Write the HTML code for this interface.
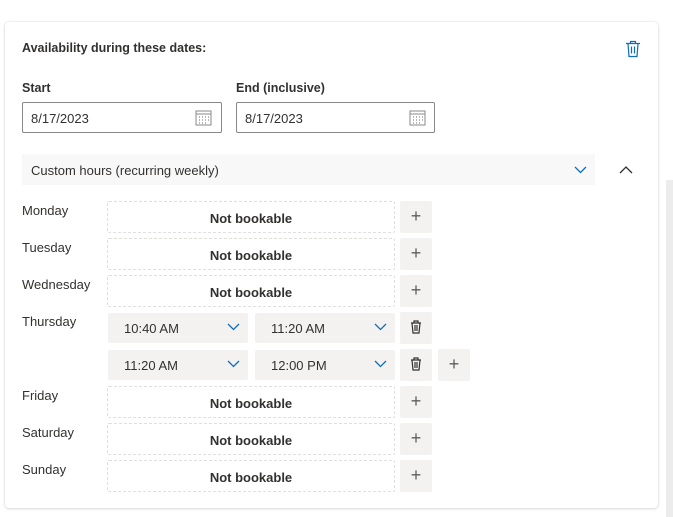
<!DOCTYPE html>
<html><head><style>
*{box-sizing:border-box;margin:0;padding:0}
body{width:673px;height:517px;background:#fff;font-family:"Liberation Sans",sans-serif;color:#323130;position:relative;overflow:hidden;font-size:13px}
.card{position:absolute;left:5px;top:22px;width:653px;height:486px;background:#fff;border-radius:4px;box-shadow:0 0 2px rgba(0,0,0,.12),0 1px 3px rgba(0,0,0,.12)}
.a{position:absolute}
.lbl{font-weight:bold;font-size:12.5px}
.inp{position:absolute;height:31px;border:1px solid #8a8886;border-radius:2px;padding:8px 0 0 8px;font-size:13px}
.nb{position:absolute;left:107px;width:288px;height:32px;border:1px dashed #e1dfdd;border-radius:2px;text-align:center;font-weight:bold;font-size:13px;padding-top:9px;color:#323130}
.btn{position:absolute;width:32px;height:32px;background:#f3f2f1;border-radius:2px;color:#605e5c;font-size:18px;text-align:center;line-height:30px}
.day{position:absolute;left:22px;font-size:13px}
.sel{position:absolute;width:140px;height:30px;background:#f3f2f1;border-radius:2px;padding:8px 0 0 16px;font-size:13px}
.chev{position:absolute;right:8px;top:10px}
</style></head><body>
<div class="card"></div>
<div class="a lbl" style="left:22px;top:41px">Availability during these dates:</div>
<svg class="a" style="left:625px;top:40px" width="16" height="18" viewBox="0 0 16 18" fill="none" stroke="#0f6cbd" stroke-width="1.2"><path d="M1 3.5h14M5.5 3.5V1.5h5v2M3 3.5l1 13h8l1-13M6.5 6.5v7M9.5 6.5v7"/></svg>
<div class="a lbl" style="left:22px;top:81px">Start</div>
<div class="a lbl" style="left:236px;top:81px">End (inclusive)</div>
<div class="inp" style="left:22px;top:102px;width:200px">8/17/2023</div>
<div class="inp" style="left:236px;top:102px;width:199px">8/17/2023</div>
<svg class="a" style="left:195px;top:110px" width="17" height="16" viewBox="0 0 17 16" fill="none" stroke="#8a8886"><rect x="1" y="1" width="15" height="14"/><path d="M1 4h15" /><path d="M4 7h1M7 7h1M10 7h1M13 7h1M4 10h1M7 10h1M10 10h1M13 10h1M4 13h1M7 13h1M10 13h1" stroke-width="1.2"/></svg>
<svg class="a" style="left:409px;top:110px" width="17" height="16" viewBox="0 0 17 16" fill="none" stroke="#8a8886"><rect x="1" y="1" width="15" height="14"/><path d="M1 4h15" /><path d="M4 7h1M7 7h1M10 7h1M13 7h1M4 10h1M7 10h1M10 10h1M13 10h1M4 13h1M7 13h1M10 13h1" stroke-width="1.2"/></svg>
<div class="a" style="left:22px;top:154px;width:573px;height:31px;background:#f8f8f8;padding:9px 0 0 9px">Custom hours (recurring weekly)</div>
<svg class="a" style="left:574px;top:166px" width="13" height="8"><path d="M1 1l5.5 5.5L12 1" stroke="#0f6cbd" fill="none" stroke-width="1.3"/></svg>
<svg class="a" style="left:619px;top:166px" width="14" height="8"><path d="M1 7l6-6 6 6" stroke="#323130" fill="none" stroke-width="1.3"/></svg>
<div class="a" style="left:666px;top:180px;width:7px;height:337px;background:#ececec"></div>

<div class="day" style="top:203px">Monday</div><div class="nb" style="top:201px">Not bookable</div><div class="btn" style="left:400px;top:201px">+</div>
<div class="day" style="top:240px">Tuesday</div><div class="nb" style="top:238px">Not bookable</div><div class="btn" style="left:400px;top:238px">+</div>
<div class="day" style="top:277px">Wednesday</div><div class="nb" style="top:275px">Not bookable</div><div class="btn" style="left:400px;top:275px">+</div>
<div class="day" style="top:314px">Thursday</div>
<div class="sel" style="left:108px;top:313px">10:40 AM<svg class="chev" width="13" height="8"><path d="M1 1l5.5 5.5L12 1" stroke="#0f6cbd" fill="none" stroke-width="1.3"/></svg></div>
<div class="sel" style="left:255px;top:313px">11:20 AM<svg class="chev" width="13" height="8"><path d="M1 1l5.5 5.5L12 1" stroke="#0f6cbd" fill="none" stroke-width="1.3"/></svg></div>
<div class="btn" style="left:400px;top:312px"><svg width="12" height="14" style="margin-top:8px" viewBox="0 0 12 14" fill="none" stroke="#323130" stroke-width="1.2"><path d="M1 3h10M4 3V1h4v2M2 3l1 10h6l1-10M5 5v6M7 5v6"/></svg></div>
<div class="sel" style="left:108px;top:350px">11:20 AM<svg class="chev" width="13" height="8"><path d="M1 1l5.5 5.5L12 1" stroke="#0f6cbd" fill="none" stroke-width="1.3"/></svg></div>
<div class="sel" style="left:255px;top:350px">12:00 PM<svg class="chev" width="13" height="8"><path d="M1 1l5.5 5.5L12 1" stroke="#0f6cbd" fill="none" stroke-width="1.3"/></svg></div>
<div class="btn" style="left:400px;top:349px"><svg width="12" height="14" style="margin-top:8px" viewBox="0 0 12 14" fill="none" stroke="#323130" stroke-width="1.2"><path d="M1 3h10M4 3V1h4v2M2 3l1 10h6l1-10M5 5v6M7 5v6"/></svg></div>
<div class="btn" style="left:438px;top:349px">+</div>
<div class="day" style="top:388px">Friday</div><div class="nb" style="top:386px">Not bookable</div><div class="btn" style="left:400px;top:386px">+</div>
<div class="day" style="top:425px">Saturday</div><div class="nb" style="top:423px">Not bookable</div><div class="btn" style="left:400px;top:423px">+</div>
<div class="day" style="top:462px">Sunday</div><div class="nb" style="top:460px">Not bookable</div><div class="btn" style="left:400px;top:460px">+</div>
</body></html>
